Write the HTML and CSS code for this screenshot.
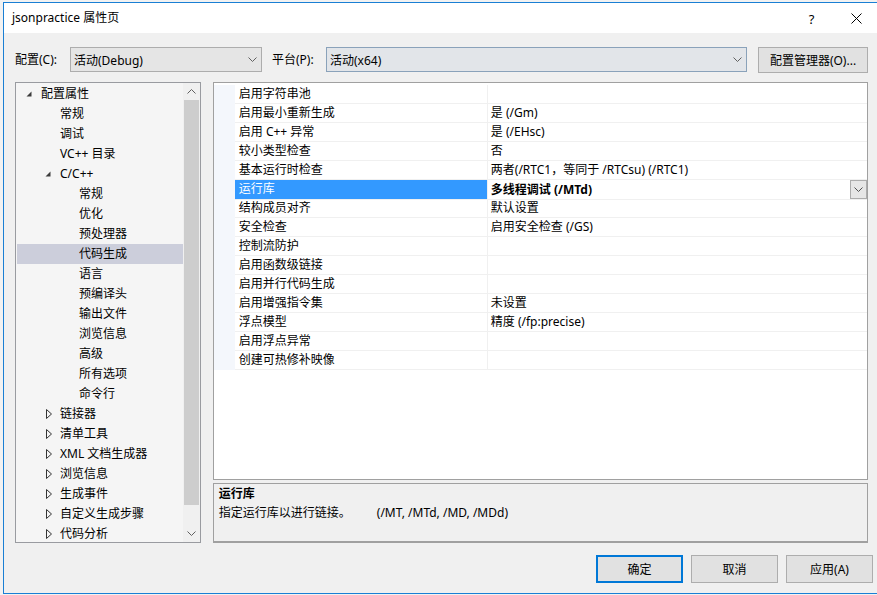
FILE: index.html
```html
<!DOCTYPE html>
<html lang="zh-CN">
<head>
    <meta charset="UTF-8">
    <title>jsonpractice 属性页</title>
    <link rel="stylesheet" href="styles.css">
</head>
<body>
    <div class="window">
        <div class="titlebar">
            <span class="title">jsonpractice 属性页</span>
            <div class="caption-buttons">
                <span class="caption-btn help">?</span>
                <span class="caption-btn">
                    <svg width="11" height="11" viewBox="0 0 11 11"><path d="M0.5 0.5 L10.5 10.5 M10.5 0.5 L0.5 10.5" stroke="#000" stroke-width="1" fill="none"/></svg>
                </span>
            </div>
        </div>

        <div class="content">
            <div class="toolbar">
                <label class="label cfg">配置(C):</label>
                <div class="combo cfg-combo">
                    <span>活动(Debug)</span>
                    <svg class="chev" width="9" height="5" viewBox="0 0 9 5"><polyline points="0.5,0.5 4.5,4.5 8.5,0.5" stroke="#606060" fill="none"/></svg>
                </div>
                <label class="label plat">平台(P):</label>
                <div class="combo plat-combo focus">
                    <span>活动(x64)</span>
                    <svg class="chev" width="9" height="5" viewBox="0 0 9 5"><polyline points="0.5,0.5 4.5,4.5 8.5,0.5" stroke="#606060" fill="none"/></svg>
                </div>
                <button class="btn manager">配置管理器(O)...</button>
            </div>

            <div class="main">
                <div class="tree">
                    <div class="tree-items">
                        <div class="tree-row l0"><span class="twisty"><svg width="6" height="6" viewBox="0 0 6 6"><path d="M5.5 0.5 L5.5 5.5 L0.5 5.5 Z" fill="#3c3c3c"/></svg></span>配置属性</div>
                        <div class="tree-row l1"><span class="twisty"></span>常规</div>
                        <div class="tree-row l1"><span class="twisty"></span>调试</div>
                        <div class="tree-row l1"><span class="twisty"></span>VC++ 目录</div>
                        <div class="tree-row l1"><span class="twisty"><svg width="6" height="6" viewBox="0 0 6 6"><path d="M5.5 0.5 L5.5 5.5 L0.5 5.5 Z" fill="#3c3c3c"/></svg></span>C/C++</div>
                        <div class="tree-row l2"><span class="twisty"></span>常规</div>
                        <div class="tree-row l2"><span class="twisty"></span>优化</div>
                        <div class="tree-row l2"><span class="twisty"></span>预处理器</div>
                        <div class="tree-row l2 selected"><span class="twisty"></span>代码生成</div>
                        <div class="tree-row l2"><span class="twisty"></span>语言</div>
                        <div class="tree-row l2"><span class="twisty"></span>预编译头</div>
                        <div class="tree-row l2"><span class="twisty"></span>输出文件</div>
                        <div class="tree-row l2"><span class="twisty"></span>浏览信息</div>
                        <div class="tree-row l2"><span class="twisty"></span>高级</div>
                        <div class="tree-row l2"><span class="twisty"></span>所有选项</div>
                        <div class="tree-row l2"><span class="twisty"></span>命令行</div>
                        <div class="tree-row l1"><span class="twisty"><svg class="closed" width="6" height="10" viewBox="0 0 6 10"><polygon points="0.5,0.5 5.5,5 0.5,9.5" stroke="#333" fill="none"/></svg></span>链接器</div>
                        <div class="tree-row l1"><span class="twisty"><svg class="closed" width="6" height="10" viewBox="0 0 6 10"><polygon points="0.5,0.5 5.5,5 0.5,9.5" stroke="#333" fill="none"/></svg></span>清单工具</div>
                        <div class="tree-row l1"><span class="twisty"><svg class="closed" width="6" height="10" viewBox="0 0 6 10"><polygon points="0.5,0.5 5.5,5 0.5,9.5" stroke="#333" fill="none"/></svg></span>XML 文档生成器</div>
                        <div class="tree-row l1"><span class="twisty"><svg class="closed" width="6" height="10" viewBox="0 0 6 10"><polygon points="0.5,0.5 5.5,5 0.5,9.5" stroke="#333" fill="none"/></svg></span>浏览信息</div>
                        <div class="tree-row l1"><span class="twisty"><svg class="closed" width="6" height="10" viewBox="0 0 6 10"><polygon points="0.5,0.5 5.5,5 0.5,9.5" stroke="#333" fill="none"/></svg></span>生成事件</div>
                        <div class="tree-row l1"><span class="twisty"><svg class="closed" width="6" height="10" viewBox="0 0 6 10"><polygon points="0.5,0.5 5.5,5 0.5,9.5" stroke="#333" fill="none"/></svg></span>自定义生成步骤</div>
                        <div class="tree-row l1"><span class="twisty"><svg class="closed" width="6" height="10" viewBox="0 0 6 10"><polygon points="0.5,0.5 5.5,5 0.5,9.5" stroke="#333" fill="none"/></svg></span>代码分析</div>
                    </div>
                    <div class="scrollbar">
                        <div class="sb-btn">
                            <svg width="9" height="5" viewBox="0 0 9 5"><polyline points="0.5,4.5 4.5,0.5 8.5,4.5" stroke="#606060" fill="none"/></svg>
                        </div>
                        <div class="sb-thumb"></div>
                        <div class="sb-track"></div>
                        <div class="sb-btn">
                            <svg width="9" height="5" viewBox="0 0 9 5"><polyline points="0.5,0.5 4.5,4.5 8.5,0.5" stroke="#606060" fill="none"/></svg>
                        </div>
                    </div>
                </div>

                <div class="right">
                    <div class="grid">
                        <div class="prop-row"><div class="gutter"></div><div class="name">启用字符串池</div><div class="value"></div></div>
                        <div class="prop-row"><div class="gutter"></div><div class="name">启用最小重新生成</div><div class="value">是 (/Gm)</div></div>
                        <div class="prop-row"><div class="gutter"></div><div class="name">启用 C++ 异常</div><div class="value">是 (/EHsc)</div></div>
                        <div class="prop-row"><div class="gutter"></div><div class="name">较小类型检查</div><div class="value">否</div></div>
                        <div class="prop-row"><div class="gutter"></div><div class="name">基本运行时检查</div><div class="value">两者(/RTC1，等同于 /RTCsu) (/RTC1)</div></div>
                        <div class="prop-row selected">
                            <div class="gutter"></div>
                            <div class="name">运行库</div>
                            <div class="value bold">
                                <span>多线程调试 (/MTd)</span>
                                <span class="dropbtn">
                                    <svg width="9" height="5" viewBox="0 0 9 5"><polyline points="0.5,0.5 4.5,4.5 8.5,0.5" stroke="#505050" fill="none"/></svg>
                                </span>
                            </div>
                        </div>
                        <div class="prop-row"><div class="gutter"></div><div class="name">结构成员对齐</div><div class="value">默认设置</div></div>
                        <div class="prop-row"><div class="gutter"></div><div class="name">安全检查</div><div class="value">启用安全检查 (/GS)</div></div>
                        <div class="prop-row"><div class="gutter"></div><div class="name">控制流防护</div><div class="value"></div></div>
                        <div class="prop-row"><div class="gutter"></div><div class="name">启用函数级链接</div><div class="value"></div></div>
                        <div class="prop-row"><div class="gutter"></div><div class="name">启用并行代码生成</div><div class="value"></div></div>
                        <div class="prop-row"><div class="gutter"></div><div class="name">启用增强指令集</div><div class="value">未设置</div></div>
                        <div class="prop-row"><div class="gutter"></div><div class="name">浮点模型</div><div class="value">精度 (/fp:precise)</div></div>
                        <div class="prop-row"><div class="gutter"></div><div class="name">启用浮点异常</div><div class="value"></div></div>
                        <div class="prop-row"><div class="gutter"></div><div class="name">创建可热修补映像</div><div class="value"></div></div>
                    </div>
                    <div class="desc">
                        <div class="desc-title">运行库</div>
                        <div class="desc-text">指定运行库以进行链接。<span class="switches">(/MT, /MTd, /MD, /MDd)</span></div>
                    </div>
                </div>
            </div>

            <div class="actions">
                <button class="btn default">确定</button>
                <button class="btn">取消</button>
                <button class="btn">应用(A)</button>
            </div>
        </div>
    </div>
</body>
</html>
```

FILE: styles.css
```css
* {
    box-sizing: border-box;
}

html, body {
    margin: 0;
}

body {
    width: 877px;
    height: 595px;
    overflow: hidden;
    background: #f2f2f2;
    font-family: "Noto Sans", "Noto Sans CJK SC", sans-serif;
    font-size: 12px;
    color: #000;
}

.window {
    margin: 2px 0 0 3px;
    width: 876px;
    height: 592px;
    border: 1px solid #1a7fd4;
    border-right: none;
    background: #f0f0f0;
    display: flex;
    flex-direction: column;
}

/* title bar */
.titlebar {
    height: 30px;
    flex-shrink: 0;
    background: #fff;
    display: flex;
    align-items: center;
}

.title {
    padding-left: 8px;
    line-height: 16px;
}

.caption-buttons {
    margin-left: auto;
    display: flex;
    height: 100%;
}

.caption-btn {
    width: 45px;
    display: flex;
    align-items: center;
    justify-content: center;
}

.caption-btn.help {
    font-size: 13px;
    padding-top: 2px;
}

/* content */
.content {
    flex: 1;
    padding: 14px 11px 0 11px;
    display: flex;
    flex-direction: column;
}

.toolbar {
    display: flex;
    align-items: center;
    height: 26px;
}

.label {
    line-height: 16px;
}

.label.cfg {
    width: 55px;
}

.label.plat {
    width: 54px;
    margin-left: 10px;
}

.combo {
    height: 25px;
    border: 1px solid #adadad;
    background: #e5e5e5;
    display: flex;
    align-items: center;
    padding: 0 4px 0 3px;
    align-self: flex-start;
}

.combo .chev {
    margin-left: auto;
}

.cfg-combo {
    width: 192px;
}

.plat-combo {
    width: 421px;
}

.combo.focus {
    border-color: #8aa2ba;
    background: #e2e5e9;
}

.btn {
    font-family: inherit;
    font-size: 12px;
    color: #000;
    background: #e1e1e1;
    border: 1px solid #adadad;
    padding: 0;
    width: 87px;
    height: 28px;
}

.btn.manager {
    width: 110px;
    height: 26px;
    margin-left: 11px;
}

.btn.default {
    border: 2px solid #0078d7;
}

/* main area */
.main {
    display: flex;
    margin-top: 9px;
    height: 461px;
}

.tree {
    width: 186px;
    border: 1px solid #999ba0;
    background: #f5f5f5;
    display: flex;
}

.tree-items {
    flex: 1;
    padding-top: 1px;
    overflow: hidden;
}

.tree-row {
    height: 20px;
    margin-left: 1px;
    display: flex;
    align-items: center;
    white-space: nowrap;
    line-height: 16px;
}

.tree-row.l0 {
    padding-left: 9px;
}

.tree-row.l1 {
    padding-left: 28px;
}

.tree-row.l2 {
    padding-left: 47px;
}

.tree-row.selected {
    background: #cccedb;
}

.twisty {
    width: 15px;
    height: 20px;
    flex-shrink: 0;
    display: flex;
    align-items: center;
}

.twisty .closed {
    margin-left: 1px;
}

.scrollbar {
    width: 17px;
    background: #f0f0f0;
    display: flex;
    flex-direction: column;
}

.sb-btn {
    height: 17px;
    display: flex;
    align-items: center;
    justify-content: center;
}

.sb-thumb {
    height: 405px;
    margin: 0 1px;
    background: #cdcdcd;
}

.sb-track {
    flex: 1;
}

.right {
    margin-left: 12px;
    width: 656px;
    display: flex;
    flex-direction: column;
}

.grid {
    height: 399px;
    border: 1px solid #a0a0a0;
    background: #fff;
    padding-top: 2px;
}

.prop-row {
    display: grid;
    grid-template-columns: 21px 253px 1fr;
    height: 19px;
}

.gutter {
    background: #f4f7fc;
}

.name,
.value {
    border-bottom: 1px solid #f0f0f0;
    line-height: 18px;
    white-space: nowrap;
}

.name {
    padding-left: 4px;
    border-right: 1px solid #f0f0f0;
}

.value {
    padding-left: 3px;
    display: flex;
    align-items: center;
}

.prop-row.selected .name {
    background: #3399ff;
    color: #fff;
}

.value.bold {
    font-weight: bold;
}

.dropbtn {
    margin-left: auto;
    width: 17px;
    height: 19px;
    align-self: flex-start;
    border: 1px solid #acacac;
    background: #e6e6e6;
    display: flex;
    align-items: center;
    justify-content: center;
}

.desc {
    margin-top: 3px;
    height: 60px;
    border: 1px solid #a0a0a0;
    border-bottom-width: 2px;
    padding: 0 5px;
    line-height: 19px;
}

.desc-title {
    font-weight: bold;
}

.switches {
    margin-left: 26px;
}

.actions {
    display: flex;
    justify-content: flex-end;
    gap: 8px;
    margin-top: 12px;
    margin-right: -5px;
}
```
